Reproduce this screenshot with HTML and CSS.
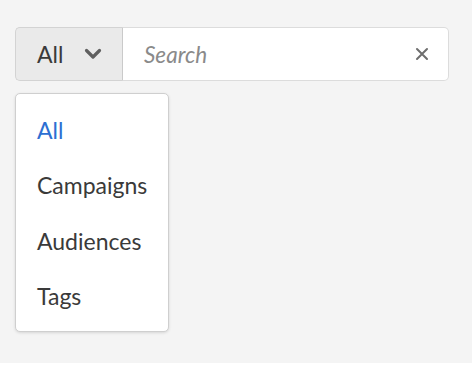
FILE: index.html
```html
<!DOCTYPE html>
<html>
<head>
<meta charset="utf-8">
<link rel="stylesheet" href="styles.css">
</head>
<body>
<div class="canvas">
  <div class="searchgroup">
    <button class="picker">
      <span class="picker-label">All</span>
      <svg class="chev" width="18" height="12" viewBox="0 0 18 12"><path d="M2.5 2.5 L9 9 L15.5 2.5" fill="none" stroke="#606060" stroke-width="3.2" stroke-linecap="round" stroke-linejoin="round"/></svg>
    </button>
    <div class="search">
      <span class="placeholder">Search</span>
      <svg class="clear" width="14" height="14" viewBox="0 0 14 14"><path d="M2 2 L12 12 M12 2 L2 12" stroke="#6e6e6e" stroke-width="2" stroke-linecap="round"/></svg>
    </div>
  </div>
  <ul class="menu">
    <li class="item selected">All</li>
    <li class="item">Campaigns</li>
    <li class="item">Audiences</li>
    <li class="item">Tags</li>
  </ul>
</div>
</body>
</html>
```
FILE: styles.css
```css
* { box-sizing: border-box; }
html, body { margin: 0; padding: 0; background: #ffffff; }
body { font-family: "Lato", "Open Sans", sans-serif; }
.canvas {
  width: 472px;
  height: 363px;
  background: #f4f4f4;
  padding: 27px 0 0 15px;
}
.searchgroup {
  display: flex;
  width: 434px;
  height: 54px;
}
.picker {
  display: flex;
  align-items: center;
  width: 108px;
  height: 54px;
  padding: 0 0 0 21px;
  margin: 0;
  background: #eaeaea;
  border: 1px solid #d3d3d3;
  border-right: 1px solid #cacaca;
  border-radius: 5px 0 0 5px;
  font-family: inherit;
  font-size: 23px;
  color: #3a3a3a;
  cursor: pointer;
}
.picker-label { width: 47px; text-align: left; }
.chev { display: block; }
.search {
  flex: 1;
  display: flex;
  align-items: center;
  justify-content: space-between;
  height: 54px;
  padding: 0 19px 0 21px;
  background: #ffffff;
  border: 1px solid #dcdcdc;
  border-left: none;
  border-radius: 0 5px 5px 0;
}
.placeholder {
  font-style: italic;
  font-size: 22.5px;
  color: #8a8a8a;
}
.clear { display: block; }
.menu {
  list-style: none;
  margin: 12px 0 0 0;
  padding: 8px 0;
  width: 154px;
  height: 239px;
  background: #ffffff;
  border: 1px solid #cfcfcf;
  border-radius: 5px;
  box-shadow: 0 1px 3px rgba(0,0,0,0.12);
}
.item {
  height: 55.5px;
  display: flex;
  align-items: center;
  padding-left: 21px;
  font-size: 23px;
  color: #3a3a3a;
}
.item.selected { color: #2d6fd2; }
```
